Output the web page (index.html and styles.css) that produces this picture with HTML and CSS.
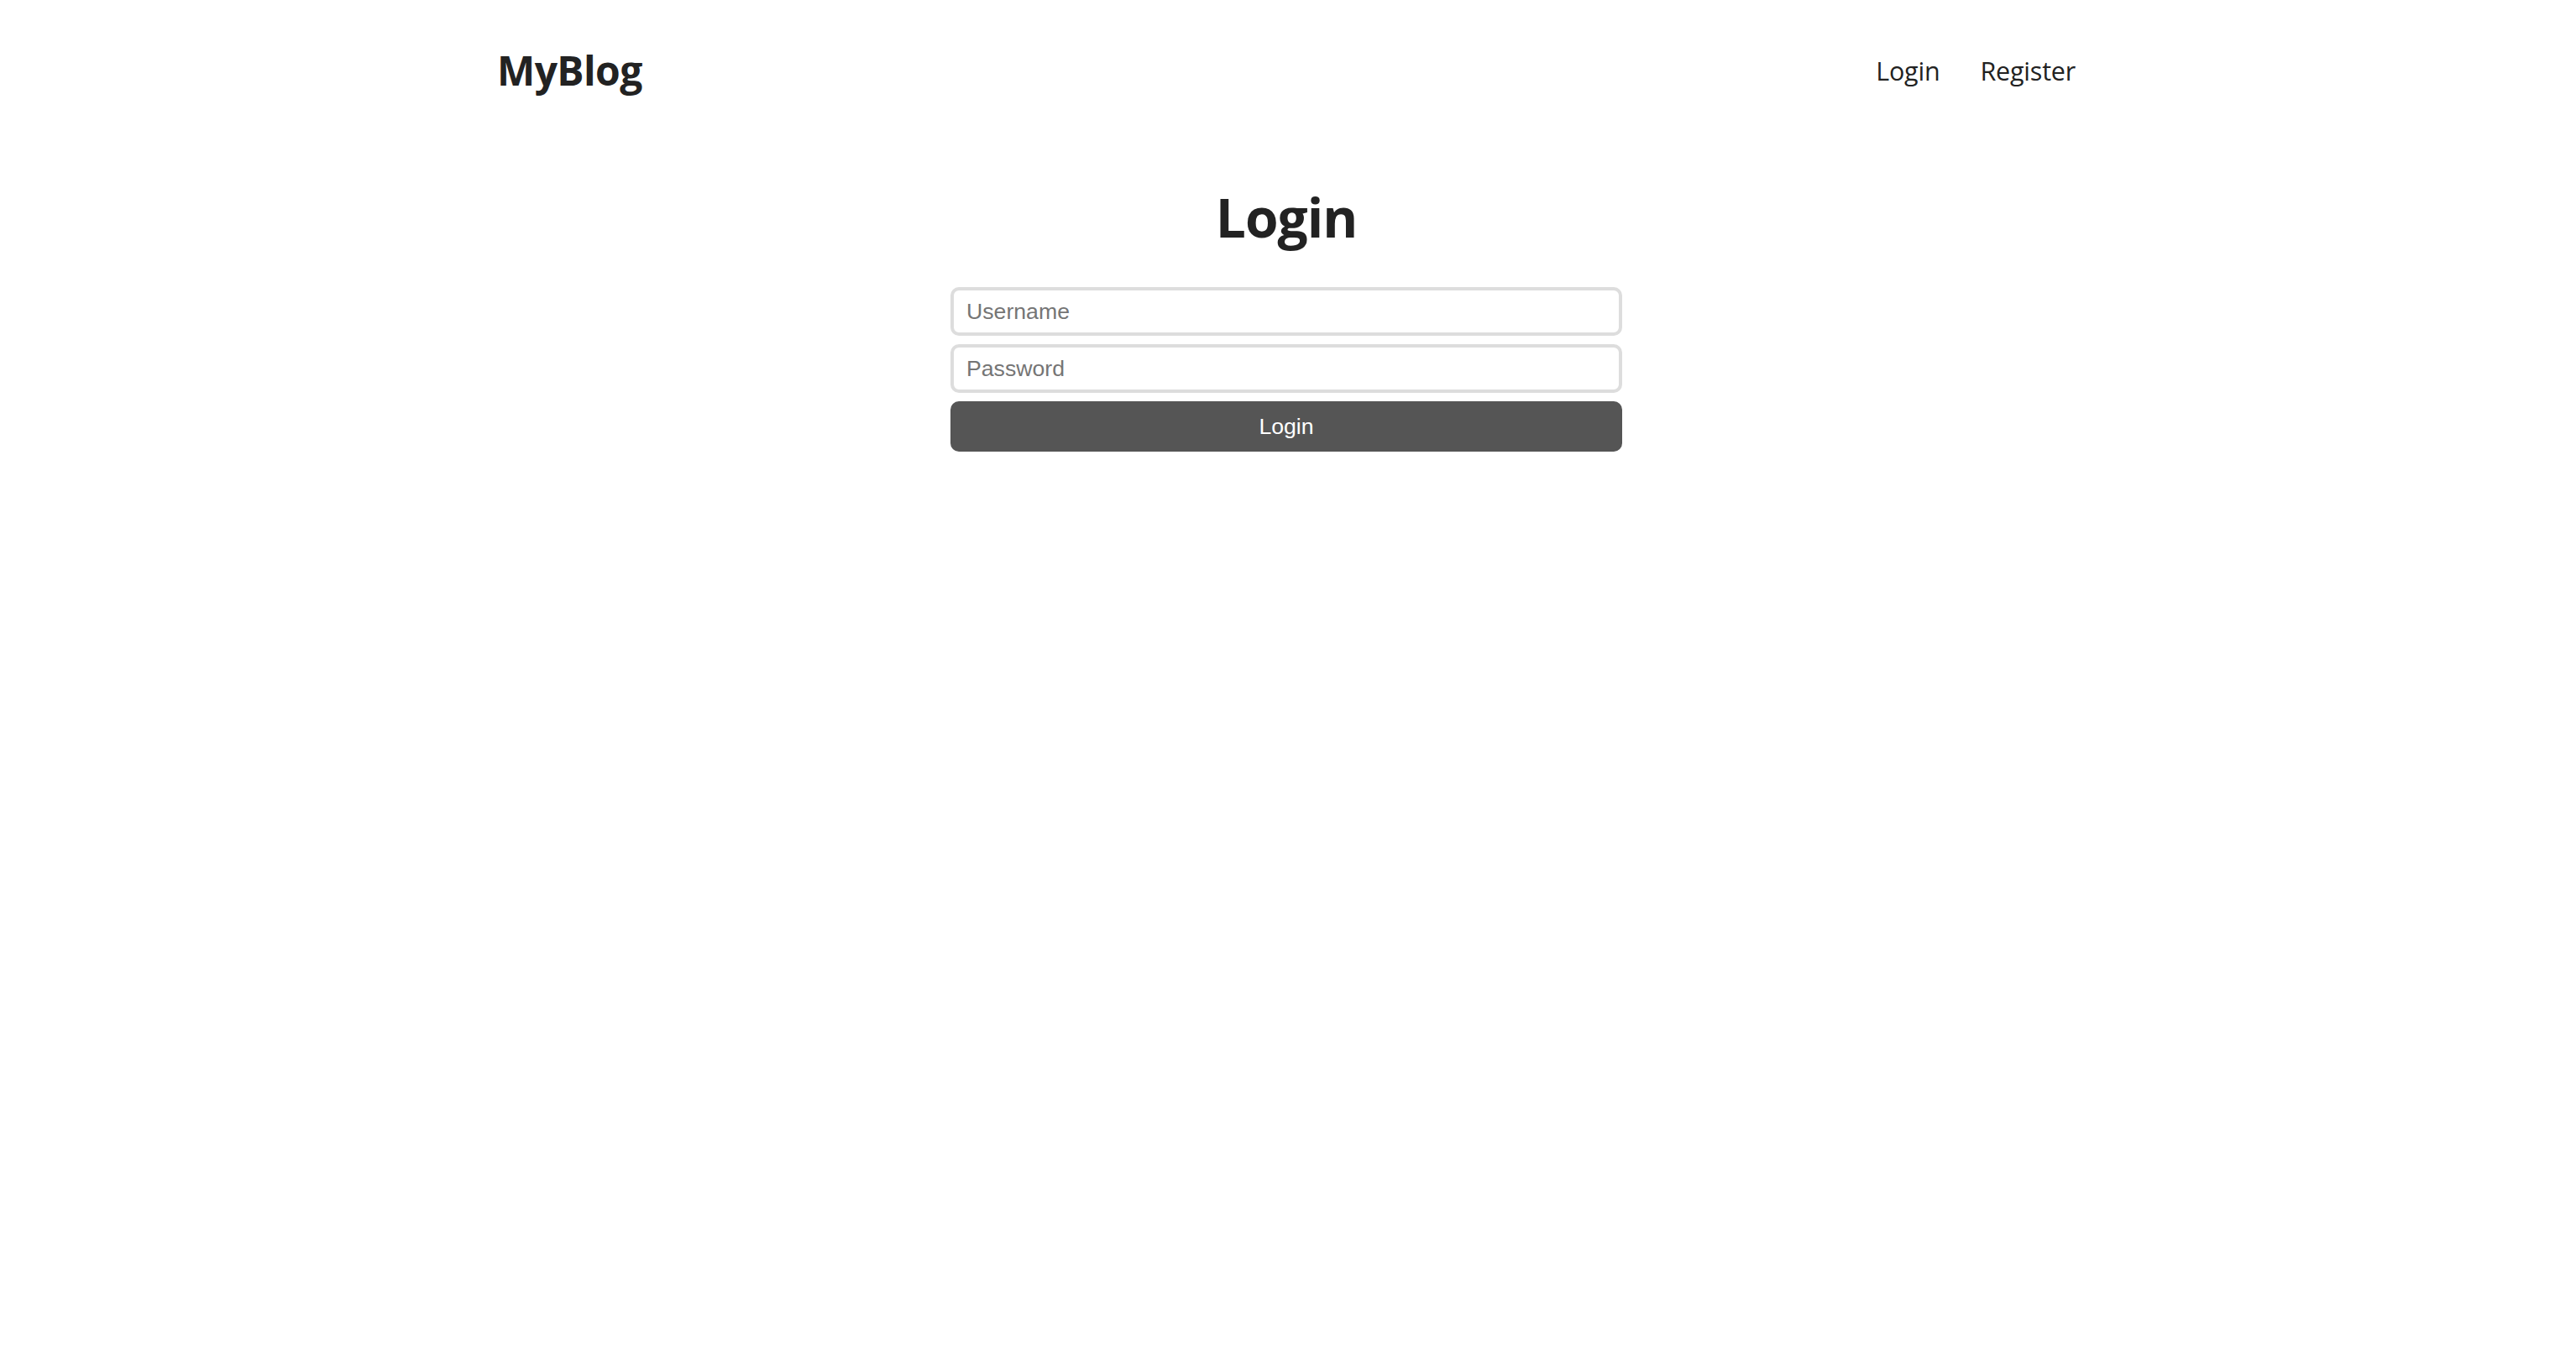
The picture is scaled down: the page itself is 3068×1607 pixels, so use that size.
FILE: index.html
```html
<!DOCTYPE html>
<html lang="en">
<head>
<meta charset="utf-8">
<title>MyBlog - Login</title>
<link rel="stylesheet" href="styles.css">
</head>
<body>
<header class="site-header">
  <div class="container header-inner">
    <a class="logo" href="#">MyBlog</a>
    <nav class="nav">
      <a href="#" class="nav-link">Login</a>
      <a href="#" class="nav-link">Register</a>
    </nav>
  </div>
</header>
<main class="main">
  <h1 class="page-title">Login</h1>
  <form class="login-form">
    <input class="field" type="text" placeholder="Username">
    <input class="field" type="password" placeholder="Password">
    <button class="btn" type="submit">Login</button>
  </form>
</main>
</body>
</html>
```

FILE: styles.css
```css
* { box-sizing: border-box; }

html, body {
  margin: 0;
  padding: 0;
  background: #ffffff;
}

body {
  padding-right: 4px;
  font-family: "Open Sans", "Noto Sans", sans-serif;
  color: #222222;
}

.container {
  width: 1880px;
  margin: 0 auto;
}

.site-header {
  padding-top: 52px;
}

.header-inner {
  display: flex;
  justify-content: space-between;
  align-items: center;
  height: 64px;
}

.logo {
  font-size: 48px;
  line-height: 64px;
  font-weight: 700;
  letter-spacing: -0.6px;
  color: #222222;
  text-decoration: none;
}

.nav {
  display: flex;
  gap: 48px;
}

.nav-link {
  font-size: 30.5px;
  line-height: 62px;
  letter-spacing: -0.2px;
  color: #222222;
  text-decoration: none;
}

.main {
  display: flex;
  flex-direction: column;
  align-items: center;
  padding-top: 99px;
}

.page-title {
  margin: 0 0 39px;
  font-size: 64px;
  line-height: 88px;
  font-weight: 700;
  letter-spacing: -1px;
  color: #222222;
}

.login-form {
  width: 800px;
  display: flex;
  flex-direction: column;
  gap: 10px;
}

.field {
  height: 58px;
  width: 100%;
  padding: 0 15px;
  border: 4px solid #dddddd;
  border-radius: 10px;
  font-family: "Liberation Sans", Arial, sans-serif;
  font-size: 26.67px;
  color: #222222;
  background: #ffffff;
  outline: none;
}

.field::placeholder {
  color: #757575;
}

.btn {
  height: 60px;
  width: 100%;
  border: none;
  border-radius: 10px;
  background: #555555;
  color: #ffffff;
  font-family: "Liberation Sans", Arial, sans-serif;
  font-size: 26.67px;
  cursor: pointer;
}
```
